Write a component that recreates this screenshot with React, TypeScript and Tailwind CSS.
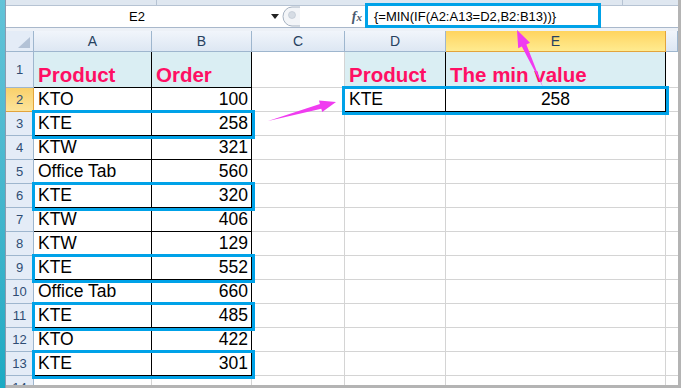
import React from 'react';

const data: [string, number][] = [
  ['KTO', 100],
  ['KTE', 258],
  ['KTW', 321],
  ['Office Tab', 560],
  ['KTE', 320],
  ['KTW', 406],
  ['KTW', 129],
  ['KTE', 552],
  ['Office Tab', 660],
  ['KTE', 485],
  ['KTO', 422],
  ['KTE', 301],
];

const colLetters = ['A', 'B', 'C', 'D', 'E', ''];

// blue highlight boxes over rows 3, 6, 9, 11, 13
const rowBoxes = [
  'top-[110px]',
  'top-[182px]',
  'top-[254px]',
  'top-[302px]',
  'top-[350px]',
];

const grid = 'border-[#d4d4d4]';
const headFill = 'bg-[#daeef3]';
const pink = 'text-[#ff0f64]';

const RowHead: React.FC<{ n: number }> = ({ n }) => (
  <div
    className={`flex items-center justify-center border-r border-b text-[13px] text-[#2f4d74] ${
      n === 2
        ? 'bg-linear-to-b from-[#f9d06a] to-[#fde49a] border-[#e2a43c]'
        : 'bg-[#e4ecf7] border-[#9eb6ce]'
    }`}
  >
    {n}
  </div>
);

const App: React.FC = () => {
  return (
    <div className="relative w-[681px] h-[388px] overflow-hidden bg-white flex font-['Liberation_Sans',Arial,sans-serif]">
      {/* window frame left */}
      <div className="w-[6px] shrink-0 bg-linear-to-b from-[#62c3d8] to-[#1aaac3] border-r border-[#8a9bb0]" />

      <div className="w-[672px] flex flex-col min-w-0">
        {/* ribbon bottom edge */}
        <div className="flex h-[6px] bg-[#dfe7f0] border-b border-[#b6c3d3]">
          <div className="w-[151px] border-r border-[#b6c3d3]" />
          <div className="w-[466px] border-r border-[#b6c3d3]" />
        </div>

        {/* formula bar */}
        <div className="flex items-center h-[21px] bg-white">
          <div className="w-[262px] text-center text-[13px] text-black">E2</div>
          <div className="w-[14px] flex items-center justify-center">
            <svg width="8" height="5" viewBox="0 0 8 5">
              <path d="M0 0 H8 L4 5 Z" fill="#222" />
            </svg>
          </div>
          <div className="w-[18px] h-full flex items-center">
            <svg width="18" height="21" viewBox="0 0 18 21">
              <path d="M18 1 H10 A9 9.5 0 0 0 10 20 H18" fill="#f3f5f8" stroke="#a7b3c2" />
              <circle cx="10" cy="9" r="3.5" fill="#d6dce4" stroke="#b9c3cf" strokeWidth="0.6" />
            </svg>
          </div>
          <div className="w-[66px] flex justify-end pr-[4px]">
            <span className="font-['Liberation_Serif',serif] italic font-bold text-[14px] text-[#4a5a6e] leading-none">
              f<span className="text-[11px]">x</span>
            </span>
          </div>
          <div className="flex-1 pl-[8px] text-[13px] text-black whitespace-nowrap">
            {'{=MIN(IF(A2:A13=D2,B2:B13))}'}
          </div>
        </div>
        <div className="h-[4px] bg-[#edf1f7] border-t border-[#a9b8cb]" />

        {/* sheet */}
        <div className="flex-1 min-h-0 overflow-hidden">
          <div className="grid grid-cols-[28px_118px_100px_93px_101px_220px_12px] grid-rows-[21px_36px_repeat(13,24px)]">
            {/* column headers */}
            <div className="flex items-end justify-end p-[3px] bg-[#e4ecf7] border-r border-b border-[#9eb6ce]">
              <svg width="12" height="11" viewBox="0 0 12 11">
                <path d="M12 0 V11 H0 Z" fill="#b3c2d6" />
              </svg>
            </div>
            {colLetters.map((c, i) => (
              <div
                key={i}
                className={`flex items-center justify-center border-b text-[14px] text-[#27415f] ${
                  c === 'E'
                    ? 'bg-linear-to-b from-[#ffd45e] to-[#ffeb8f] border-r border-[#e2a43c]'
                    : 'bg-linear-to-b from-[#f1f5fb] to-[#dde7f3] border-r border-[#9eb6ce]'
                }`}
              >
                {c}
              </div>
            ))}

            {/* row 1 */}
            <RowHead n={1} />
            <div className={`flex items-end pl-[4px] pb-[2px] border-r border-b border-black ${headFill} text-[20.5px] font-bold leading-none ${pink}`}>
              Product
            </div>
            <div className={`flex items-end pl-[4px] pb-[2px] border-r border-b border-black ${headFill} text-[20.5px] font-bold leading-none ${pink}`}>
              Order
            </div>
            <div className={`border-r border-b ${grid}`} />
            <div className={`flex items-end pl-[4px] pb-[2px] border-r border-b border-black ${headFill} text-[20.5px] font-bold leading-none ${pink}`}>
              Product
            </div>
            <div className={`flex items-end pl-[4px] pb-[2px] border-r border-b border-black ${headFill} text-[20.5px] font-bold leading-none whitespace-nowrap ${pink}`}>
              The min value
            </div>
            <div className={`border-b ${grid}`} />

            {/* data rows */}
            {data.map(([name, val], i) => {
              const n = i + 2;
              return (
                <React.Fragment key={n}>
                  <RowHead n={n} />
                  <div className="pl-[4px] border-r border-b border-black text-[17.5px] leading-[23px] text-black whitespace-nowrap">
                    {name}
                  </div>
                  <div className="pr-[3px] text-right border-r border-b border-black text-[17.5px] leading-[23px] text-black">
                    {val}
                  </div>
                  <div className={`border-r border-b ${grid}`} />
                  {n === 2 ? (
                    <>
                      <div className="pl-[4px] border-r border-b border-black text-[17.5px] leading-[23px] text-black">KTE</div>
                      <div className="text-center border-r border-b border-black text-[17.5px] leading-[23px] text-black">258</div>
                    </>
                  ) : (
                    <>
                      <div className={`border-r border-b ${grid}`} />
                      <div className={`border-r border-b ${grid}`} />
                    </>
                  )}
                  <div className={`border-b ${grid}`} />
                </React.Fragment>
              );
            })}

            {/* row 14, cut off */}
            <RowHead n={14} />
            <div className={`border-r border-b ${grid}`} />
            <div className={`border-r border-b ${grid}`} />
            <div className={`border-r border-b ${grid}`} />
            <div className={`border-r border-b ${grid}`} />
            <div className={`border-r border-b ${grid}`} />
            <div className={`border-b ${grid}`} />
          </div>
        </div>
        <div className="h-[3px] shrink-0 bg-[#b4b4b4]" />
      </div>

      {/* window frame right */}
      <div className="w-[3px] shrink-0 bg-[#b4b4b4]" />

      {/* annotation boxes */}
      <div className="absolute left-[365px] top-[3px] w-[236px] h-[25px] border-[3px] border-[#00a2e8] pointer-events-none" />
      <div className="absolute left-[342px] top-[86px] w-[327px] h-[29px] border-[3px] border-[#00a2e8] pointer-events-none" />
      {rowBoxes.map((t) => (
        <div
          key={t}
          className={`absolute left-[32px] w-[223px] h-[29px] border-[3px] border-[#00a2e8] pointer-events-none ${t}`}
        />
      ))}

      {/* arrows */}
      <svg className="absolute inset-0 pointer-events-none" width="681" height="388" viewBox="0 0 681 388">
        <polygon
          points="268,121 319.9,103.9 319,100.5 336,102 322.2,112.1 321.3,108.7"
          fill="#f03cf0"
        />
        <polygon
          points="543,87 526.4,44.5 530,42.8 517,30 518.2,48.2 521.8,46.5"
          fill="#f03cf0"
        />
      </svg>
    </div>
  );
};

export default App;
